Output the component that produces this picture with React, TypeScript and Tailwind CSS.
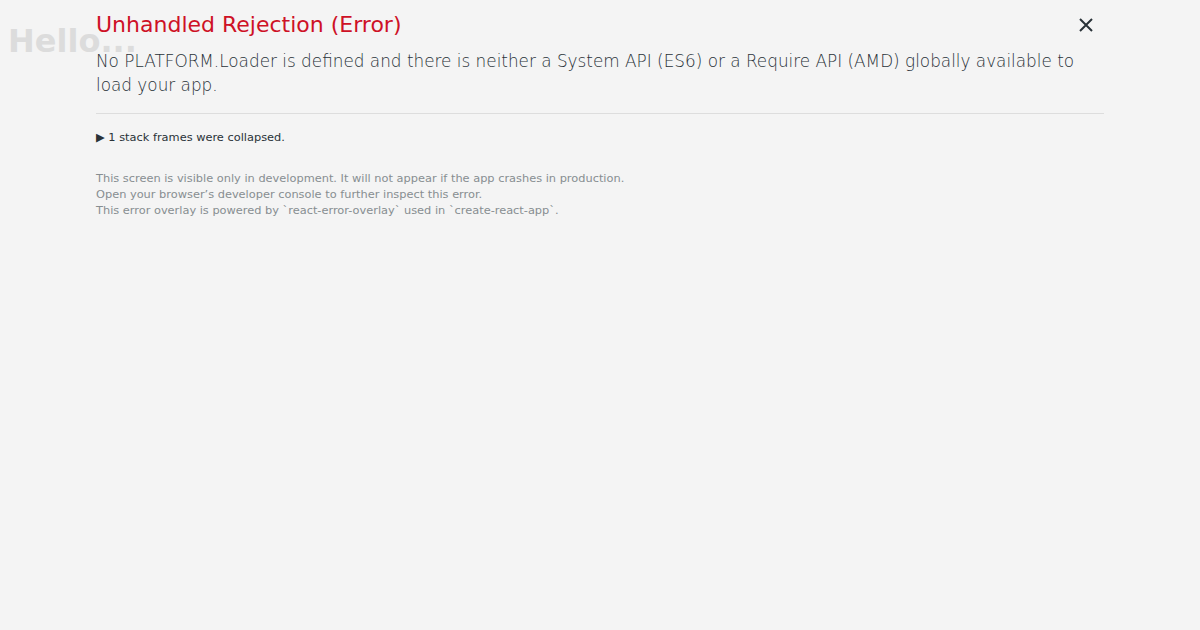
export default function App() {
  return (
    <div
      className="relative w-[1200px] h-[630px] overflow-hidden bg-[#f4f4f4]"
      style={{ fontFamily: '"DejaVu Sans", sans-serif' }}
    >
      {/* app content behind the overlay */}
      <div className="absolute left-[8px] top-[21px] text-[32px] font-bold leading-[40px] text-[#dcdcdc]">
        Hello...
      </div>

      <div className="relative px-[96px] pt-[9px]">
        <div className="flex items-start justify-between">
          <h1 className="text-[22px] leading-[32px] text-[#ce1126]">
            Unhandled Rejection (Error)
          </h1>
          <button className="mt-[8px] mr-[10px] text-[#293238]" aria-label="close">
            <svg width="16" height="16" viewBox="0 0 16 16" fill="none">
              <path d="M2 2L14 14M14 2L2 14" stroke="#293238" strokeWidth="2" />
            </svg>
          </button>
        </div>
        <div className="mt-[8px] pb-[16px] border-b border-[#dddddd] text-[16.85px] font-extralight leading-[24px] text-[#293238]">
          No PLATFORM.Loader is defined and there is neither a System API (ES6) or a Require API (AMD) globally available to load your app.
        </div>
        <div className="mt-[15px] text-[11.36px] leading-[16px] text-[#293238]">
          ▶ 1 stack frames were collapsed.
        </div>
        <div className="mt-[25px] text-[11.36px] leading-[16px] text-[#878e91]">
          <div>This screen is visible only in development. It will not appear if the app crashes in production.</div>
          <div>Open your browser’s developer console to further inspect this error.</div>
          <div>This error overlay is powered by `react-error-overlay` used in `create-react-app`.</div>
        </div>
      </div>
    </div>
  );
}
